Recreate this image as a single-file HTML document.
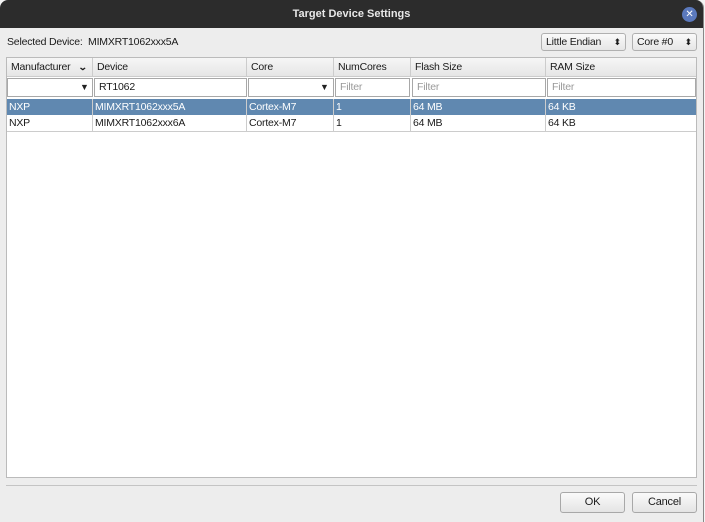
<!DOCTYPE html><html><head><style>
body{margin:0;width:705px;height:522px;background:#f4f4f4;font-family:"Liberation Sans",sans-serif;font-size:10.5px;letter-spacing:-0.2px;color:#1a1a1a;position:relative;overflow:hidden}
.a{position:absolute}
.win{left:0;top:0;width:703px;height:522px;background:#ededed;border-radius:8px 8px 0 0;overflow:hidden;border-right:1px solid #888}
.tb{left:0;top:0;width:703px;height:28px;background:#2c2c2c;color:#e8e8e8;font-weight:bold;font-size:11px;letter-spacing:0;text-align:center;line-height:28px}
.x{left:682px;top:7px;width:15px;height:15px;border-radius:50%;background:#5b79bd;color:#fff;font-size:10px;line-height:15px;text-align:center}
.sel{border:1px solid #b0b0b0;border-radius:3px;background:linear-gradient(#fafafa,#e6e6e6);height:18px;line-height:16px;padding-left:4px;box-sizing:border-box}
.tbl{left:6px;top:57px;width:691px;height:421px;background:#fff;border:1px solid #bbb;box-sizing:border-box}
.h{top:0;height:19px;line-height:19px;background:linear-gradient(#f6f6f6,#e6e6e6);border-right:1px solid #ccc;border-bottom:1px solid #ccc;padding-left:4px;box-sizing:border-box}
.f{top:20px;height:19px;line-height:17px;background:#fff;border:1px solid #a8a8a8;padding-left:4px;box-sizing:border-box;color:#999}
.r{height:16px;line-height:16px;padding-left:2px;box-sizing:border-box;border-right:1px solid #ccc}
.btn{top:492px;height:21px;line-height:19px;text-align:center;border:1px solid #a8a8a8;border-radius:3px;background:linear-gradient(#fafafa,#e4e4e4);box-sizing:border-box;font-size:11px}
.chev{font-weight:bold;font-size:9px;transform:scaleX(1.3)}
</style></head><body>
<div class="a win">
<div class="a tb">Target Device Settings</div>
<div class="a x">✕</div>
<div class="a" style="left:7px;top:36px">Selected Device:&nbsp; MIMXRT1062xxx5A</div>
<div class="a sel" style="left:541px;top:33px;width:85px">Little Endian<span class="a" style="right:4px;top:0;font-size:9px">⬍</span></div>
<div class="a sel" style="left:632px;top:33px;width:65px">Core #0<span class="a" style="right:4px;top:0;font-size:9px">⬍</span></div>
<div class="a tbl">
<div class="a h" style="left:0;width:86px">Manufacturer<span class="a chev" style="left:72px">⌄</span></div>
<div class="a h" style="left:86px;width:154px">Device</div>
<div class="a h" style="left:240px;width:87px">Core</div>
<div class="a h" style="left:327px;width:77px">NumCores</div>
<div class="a h" style="left:404px;width:135px">Flash Size</div>
<div class="a h" style="left:539px;width:150px;border-right:0">RAM Size</div>
<div class="a f" style="left:0;width:86px"><span class="a" style="left:72px;color:#222;font-size:9px">▼</span></div>
<div class="a f" style="left:87px;width:153px;color:#1a1a1a">RT1062</div>
<div class="a f" style="left:241px;width:86px"><span class="a" style="left:71px;color:#222;font-size:9px">▼</span></div>
<div class="a f" style="left:328px;width:75px">Filter</div>
<div class="a f" style="left:405px;width:134px">Filter</div>
<div class="a f" style="left:540px;width:149px">Filter</div>
<div class="a" style="left:0;top:41px;width:689px;height:16px;background:#6088b0;color:#fff">
<div class="a r" style="left:0;width:86px">NXP</div><div class="a r" style="left:86px;width:154px">MIMXRT1062xxx5A</div><div class="a r" style="left:240px;width:87px">Cortex-M7</div><div class="a r" style="left:327px;width:77px">1</div><div class="a r" style="left:404px;width:135px">64 MB</div><div class="a r" style="left:539px;width:150px;border:0">64 KB</div></div>
<div class="a" style="left:0;top:57px;width:689px;height:16px;border-bottom:1px solid #ccc">
<div class="a r" style="left:0;width:86px">NXP</div><div class="a r" style="left:86px;width:154px">MIMXRT1062xxx6A</div><div class="a r" style="left:240px;width:87px">Cortex-M7</div><div class="a r" style="left:327px;width:77px">1</div><div class="a r" style="left:404px;width:135px">64 MB</div><div class="a r" style="left:539px;width:150px;border:0">64 KB</div></div>
</div>
<div class="a" style="left:6px;top:485px;width:691px;height:1px;background:#c4c4c4"></div>
<div class="a btn" style="left:560px;width:65px">OK</div>
<div class="a btn" style="left:632px;width:65px">Cancel</div>
</div>
</body></html>
